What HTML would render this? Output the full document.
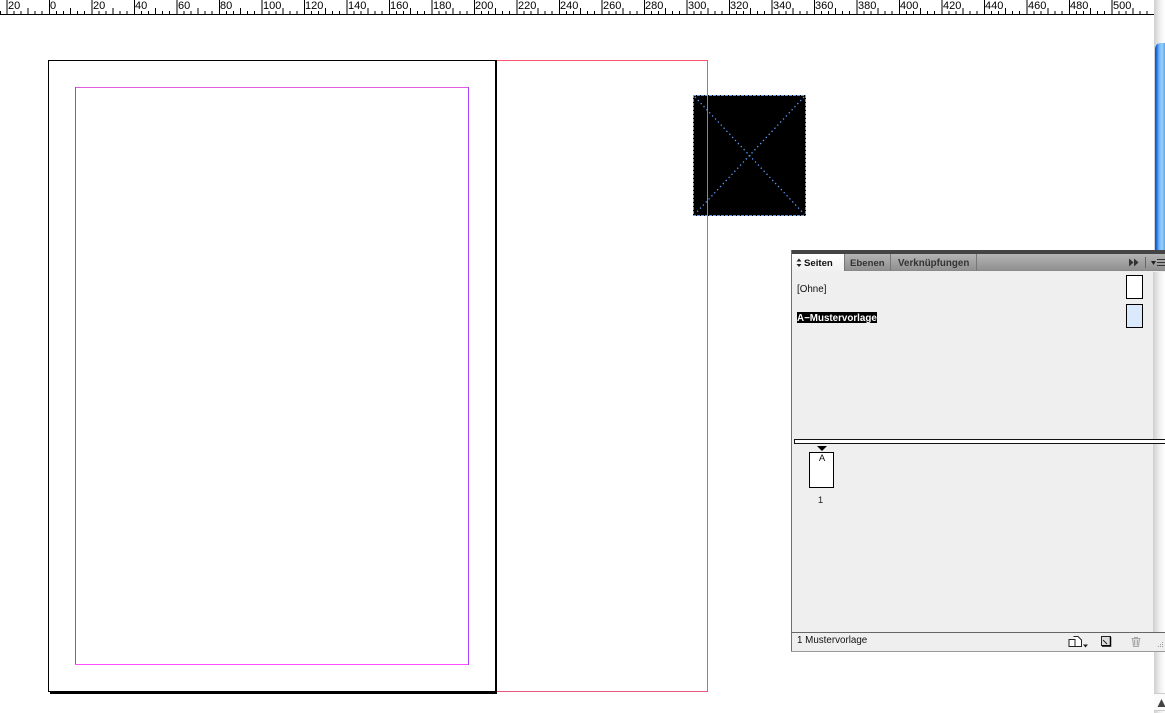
<!DOCTYPE html>
<html lang="de"><head><meta charset="utf-8"><title>Seiten</title>
<style>
html,body{margin:0;padding:0;background:#fff}
body{width:1165px;height:713px;overflow:hidden;position:relative}
svg{position:absolute;left:0;top:0}
text{font-family:"Liberation Sans",sans-serif}
</style></head><body>
<svg width="1165" height="713" viewBox="0 0 1165 713">
<defs>
<g id="t" fill="#000" shape-rendering="crispEdges">
<rect x="0" y="0" width="1" height="14"/>
<rect x="7" y="11" width="1" height="3"/>
<rect x="14" y="11" width="1" height="3"/>
<rect x="21" y="8" width="1" height="6"/>
<rect x="28" y="11" width="1" height="3"/>
<rect x="35" y="11" width="1" height="3"/>
</g>
<linearGradient id="sb" x1="0" x2="1" y1="0" y2="0"><stop offset="0" stop-color="#cfcfcf"/><stop offset=".55" stop-color="#f0f0f0"/><stop offset="1" stop-color="#fff"/></linearGradient>
<linearGradient id="th" x1="0" x2="1" y1="0" y2="0"><stop offset="0" stop-color="#0a4fc4"/><stop offset=".18" stop-color="#1f6fe0"/><stop offset=".4" stop-color="#70b4f4"/><stop offset=".7" stop-color="#9ad0fa"/><stop offset="1" stop-color="#5ca6ee"/></linearGradient>
<linearGradient id="tb" x1="0" x2="0" y1="0" y2="1"><stop offset="0" stop-color="#b4b4b4"/><stop offset="1" stop-color="#8e8e8e"/></linearGradient>
<linearGradient id="ta" x1="0" x2="0" y1="0" y2="1"><stop offset="0" stop-color="#fff"/><stop offset="1" stop-color="#f0f0f0"/></linearGradient>
</defs>

<!-- ruler -->
<rect x="0" y="14" width="1154" height="1" fill="#000" shape-rendering="crispEdges"/>
<rect x="0" y="11" width="1" height="3" fill="#000"/>
<use href="#t" x="6.4"/><use href="#t" x="48.9"/><use href="#t" x="91.4"/><use href="#t" x="133.9"/><use href="#t" x="176.4"/><use href="#t" x="218.9"/><use href="#t" x="261.4"/><use href="#t" x="303.9"/><use href="#t" x="346.4"/><use href="#t" x="388.9"/><use href="#t" x="431.4"/><use href="#t" x="473.9"/><use href="#t" x="516.4"/><use href="#t" x="558.9"/><use href="#t" x="601.4"/><use href="#t" x="643.9"/><use href="#t" x="686.4"/><use href="#t" x="728.9"/><use href="#t" x="771.4"/><use href="#t" x="813.9"/><use href="#t" x="856.4"/><use href="#t" x="898.9"/><use href="#t" x="941.4"/><use href="#t" x="983.9"/><use href="#t" x="1026.4"/><use href="#t" x="1068.9"/><use href="#t" x="1111.4"/>
<g font-size="11" fill="#000">
<text x="8" y="9">20</text><text x="50" y="9">0</text><text x="93" y="9">20</text><text x="135" y="9">40</text><text x="178" y="9">60</text><text x="220" y="9">80</text><text x="263" y="9">100</text><text x="305" y="9">120</text><text x="348" y="9">140</text><text x="390" y="9">160</text><text x="433" y="9">180</text><text x="475" y="9">200</text><text x="518" y="9">220</text><text x="560" y="9">240</text><text x="603" y="9">260</text><text x="645" y="9">280</text><text x="688" y="9">300</text><text x="730" y="9">320</text><text x="773" y="9">340</text><text x="815" y="9">360</text><text x="858" y="9">380</text><text x="900" y="9">400</text><text x="943" y="9">420</text><text x="985" y="9">440</text><text x="1028" y="9">460</text><text x="1070" y="9">480</text><text x="1113" y="9">500</text>
</g>

<!-- scrollbar -->
<rect x="1154" y="0" width="11" height="713" fill="url(#sb)"/>
<path d="M1155 260V50Q1155 43 1161 43H1165V260Z" fill="url(#th)"/>

<!-- slug frame -->
<g shape-rendering="crispEdges">
<rect x="497" y="60" width="211" height="1" fill="#ff5070"/>
<rect x="707" y="60" width="1" height="632" fill="#e85878"/>
<rect x="497" y="691" width="211" height="1" fill="#e85878"/>
<!-- page -->
<rect x="48" y="60" width="448" height="1" fill="#000"/>
<rect x="48" y="60" width="1" height="632" fill="#000"/>
<rect x="48" y="691" width="448" height="1" fill="#000"/>
<rect x="495" y="60" width="2" height="634" fill="#000"/>
<rect x="50" y="692" width="447" height="2" fill="#000"/>
<!-- margin guides -->
<rect x="75" y="87" width="394" height="1" fill="#e25ce2"/>
<rect x="75" y="87" width="1" height="578" fill="#a040f0"/>
<rect x="75" y="664" width="394" height="1" fill="#ff50ff"/>
<rect x="468" y="87" width="1" height="578" fill="#b040ff"/>
<!-- black frame -->
<rect x="693" y="95" width="113" height="121" fill="#000"/>
<rect x="707" y="95" width="1" height="121" fill="#ff5070"/>
<path d="M693 95.500H806M693 215.500H806M693.500 95V216M805.500 95V216" stroke="#6a9de8" stroke-width="1" stroke-dasharray="3 1" fill="none"/>
</g>
<path d="M695 97L804 214M804 97L695 214" stroke="#5c9dff" stroke-width="1.300" stroke-dasharray="1.300 2.900" fill="none"/>

<!-- panel -->
<rect x="791" y="250" width="374" height="402" fill="#efefef"/>
<rect x="791" y="250" width="374" height="4" fill="#444"/>
<rect x="791" y="254" width="374" height="17" fill="url(#tb)"/>
<rect x="791" y="270" width="374" height="1" fill="#8a8a8a"/>
<rect x="792" y="254" width="52" height="18" fill="url(#ta)"/>
<rect x="844" y="254" width="1" height="17" fill="#777"/>
<rect x="890" y="254" width="1" height="17" fill="#777"/>
<rect x="976" y="254" width="1" height="17" fill="#777"/>
<rect x="791" y="250" width="1" height="402" fill="#6f6f6f"/>
<rect x="1153" y="272" width="12" height="360" fill="url(#sb)"/>
<path d="M796.500 261.500L799 258.500L801.500 261.500ZM796.500 264L799 267L801.500 264Z" fill="#222"/>
<text x="804" y="266" font-size="9.600" font-weight="bold" fill="#111">Seiten</text>
<text x="850" y="266" font-size="9.600" font-weight="bold" fill="#333">Ebenen</text>
<text x="898" y="266" font-size="9.800" font-weight="bold" fill="#333">Verknüpfungen</text>
<path d="M1129 258.500L1133.500 262.500L1129 266.500ZM1134 258.500L1138.500 262.500L1134 266.500Z" fill="#333"/>
<rect x="1145" y="257" width="1" height="11" fill="#666"/>
<path d="M1151 261H1156L1153.500 265Z" fill="#222"/>
<path d="M1157 259.500H1165M1157 262.500H1165M1157 265.500H1165" stroke="#333" stroke-width="1"/>

<text x="797" y="292" font-size="9.800" fill="#111">[Ohne]</text>
<rect x="1126.500" y="275.500" width="16" height="23" fill="#fff" stroke="#000"/>
<rect x="797" y="312" width="80" height="11" fill="#000"/>
<text x="797" y="321" font-size="9.800" font-weight="bold" fill="#fff">A−Mustervorlage</text>
<rect x="1126.500" y="304.500" width="16" height="23" fill="#dbe9fd" stroke="#000"/>

<path d="M1165 439.500H794.500V443.500H1165" fill="#fff" stroke="#111"/>
<path d="M817 446H827L822 451Z" fill="#000"/>
<rect x="809.500" y="452.500" width="24" height="35" fill="#fff" stroke="#000"/>
<text x="822" y="461" font-size="9.500" fill="#111" text-anchor="middle">A</text>
<text x="820.500" y="503" font-size="9.500" fill="#222" text-anchor="middle">1</text>

<rect x="791" y="632" width="374" height="1" fill="#666"/>
<rect x="791" y="651" width="374" height="1" fill="#999"/>
<text x="797" y="643" font-size="9.800" fill="#111">1 Mustervorlage</text>
<path d="M1069 639.500H1075V646.500H1069ZM1073.500 636.500H1078L1081.500 640V646.500H1075" fill="#fff" stroke="#222" stroke-width="1"/>
<path d="M1083 644.500H1088L1085.500 647.500Z" fill="#222"/>
<rect x="1101.500" y="636.500" width="9" height="9" fill="#ddd" stroke="#222"/>
<path d="M1103 640L1107 644" stroke="#222" fill="none"/>
<path d="M1110.500 637V646H1102" stroke="#000" stroke-width="1.500" fill="none"/>
<path d="M1131.500 638.500H1140.500M1132.500 639L1133.500 646.500H1138.500L1139.500 639M1134.500 640V645M1137.500 640V645" stroke="#aaa" fill="#ddd"/>
<path d="M1134 637.500H1138" stroke="#aaa"/>
<path d="M1162 642h1v1h-1zM1160 644h1v1h-1zM1162 644h1v1h-1zM1158 646h1v1h-1zM1160 646h1v1h-1zM1162 646h1v1h-1z" fill="#999"/>

<!-- scrollbar foot -->
<path d="M1154 652V686Q1155 693 1161 693H1165V652Z" fill="url(#sb)"/>
<rect x="1154" y="693" width="11" height="1" fill="#ccc"/>
<rect x="1154" y="694" width="11" height="17" fill="#fbfbfb"/>
<path d="M1157.500 707L1161.500 699L1165 706V707Z" fill="#444"/>
<rect x="1154" y="710" width="11" height="1" fill="#ccc"/>
</svg>
</body></html>
